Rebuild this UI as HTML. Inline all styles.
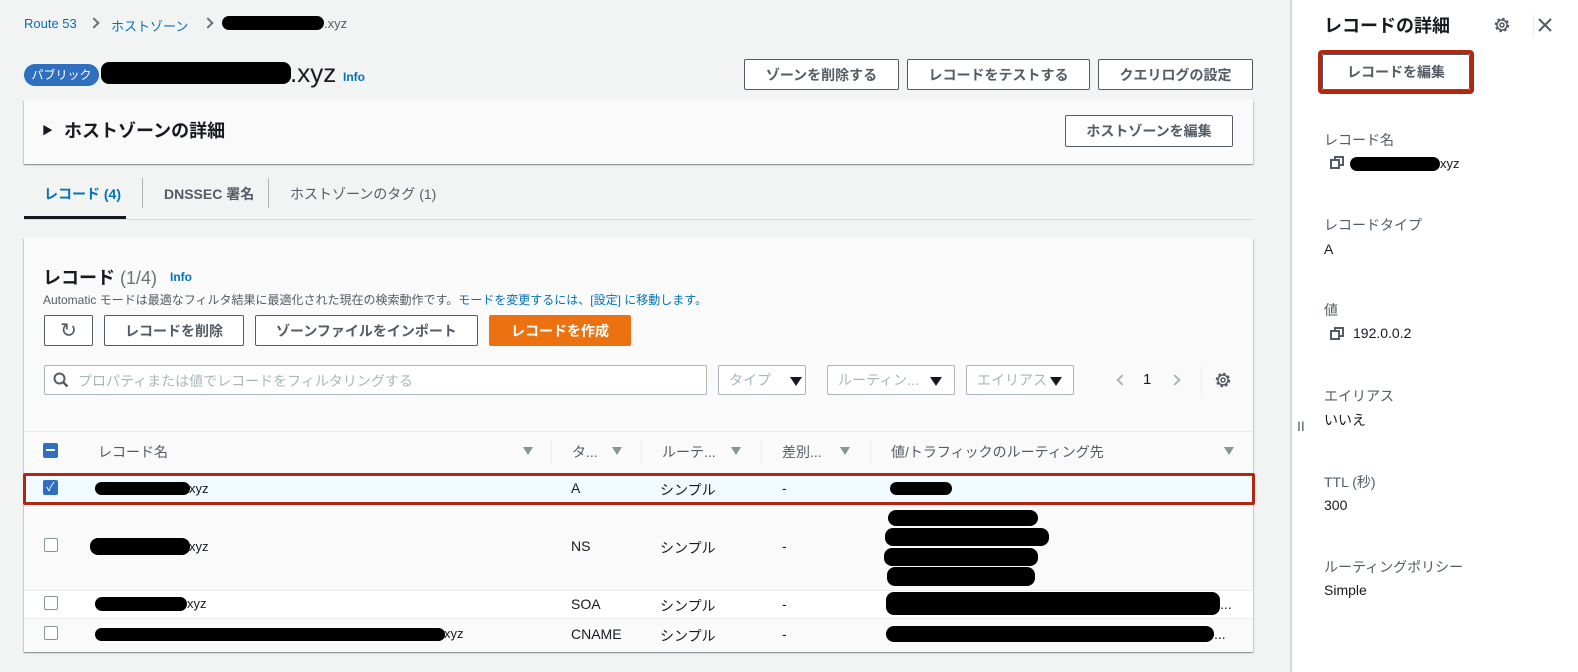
<!DOCTYPE html>
<html><head><meta charset="utf-8"><style>
*{box-sizing:border-box;margin:0;padding:0}
body{width:1578px;height:672px;overflow:hidden;background:#f2f3f3;font-family:"Liberation Sans","Noto Sans CJK JP",sans-serif;color:#16191f;position:relative;font-size:14px}
.a{position:absolute;white-space:nowrap}
.btn{position:absolute;border:1px solid #545b64;border-radius:2px;background:#fff;font-weight:bold;color:#545b64;font-size:14px;display:flex;align-items:center;justify-content:center}
.blk{position:absolute;background:#000;border-radius:8px}
.link{color:#0073bb}
.gray{color:#545b64}
.card{position:absolute;background:#fafafa;box-shadow:0 1px 1px rgba(0,28,36,.3),1px 1px 1px rgba(0,28,36,.15),-1px 1px 1px rgba(0,28,36,.15)}
.sel{position:absolute;border:1px solid #aab7b8;border-radius:2px;background:#fff;color:#aab7b8;font-size:14px;padding-left:10px;display:flex;align-items:center}
.tri{position:absolute;width:0;height:0;border-left:6px solid transparent;border-right:6px solid transparent;border-top:9px solid #16191f}
.ft{position:absolute;width:0;height:0;border-left:5px solid transparent;border-right:5px solid transparent;border-top:8px solid #879596}
.cb{position:absolute;width:14px;height:14px;border:1px solid #879596;border-radius:2px;background:#fff}
.hr{position:absolute;height:1px;background:#eaeded}
.chev{position:absolute;width:8px;height:8px;border-top:2px solid #687078;border-right:2px solid #687078;transform:rotate(45deg)}
</style></head><body>
<div class="a link" style="left:24px;top:16px;font-size:13px">Route 53</div>
<div class="chev" style="left:90px;top:19px"></div>
<div class="a link" style="left:111px;top:16px;font-size:13px">ホストゾーン</div>
<div class="chev" style="left:204px;top:19px"></div>
<div class="blk" style="left:222px;top:16px;width:102px;height:14px"></div>
<div class="a" style="left:324px;top:16px;font-size:13px;color:#545b64">.xyz</div>

<div class="a" style="left:24px;top:64px;width:75px;height:22px;background:#2e6fc0;border-radius:11px;color:#fff;font-size:12px;text-align:center;line-height:22px">パブリック</div>
<div class="blk" style="left:101px;top:62px;width:190px;height:22px"></div>
<div class="a" style="left:290px;top:58px;font-size:26px">.xyz</div>
<div class="a link" style="left:343px;top:70px;font-size:12px;font-weight:bold">Info</div>
<div class="btn" style="left:744px;top:59px;width:155px;height:31px">ゾーンを削除する</div>
<div class="btn" style="left:907px;top:59px;width:183px;height:31px">レコードをテストする</div>
<div class="btn" style="left:1098px;top:59px;width:155px;height:31px">クエリログの設定</div>

<div class="card" style="left:24px;top:100px;width:1229px;height:64px"></div>
<div class="a" style="left:42px;top:122px;font-size:11px">▶</div>
<div class="a" style="left:64px;top:117px;font-size:18px;font-weight:bold">ホストゾーンの詳細</div>
<div class="btn" style="left:1065px;top:115px;width:168px;height:32px">ホストゾーンを編集</div>

<div class="a link" style="left:44px;top:184px;font-size:14px;font-weight:bold">レコード (4)</div>
<div class="a" style="left:24px;top:216px;width:102px;height:3px;background:#16191f"></div>
<div class="a" style="left:142px;top:178px;width:1px;height:30px;background:#aab7b8"></div>
<div class="a gray" style="left:164px;top:184px;font-weight:bold">DNSSEC 署名</div>
<div class="a" style="left:268px;top:178px;width:1px;height:30px;background:#aab7b8"></div>
<div class="a gray" style="left:290px;top:184px">ホストゾーンのタグ (1)</div>
<div class="a" style="left:24px;top:219px;width:1229px;height:1px;background:#d5dbdb"></div>

<div class="card" style="left:24px;top:238px;width:1229px;height:414px"></div>
<div class="a" style="left:43px;top:264px;font-size:18px;font-weight:bold">レコード <span style="font-weight:normal;color:#687078">(1/4)</span></div>
<div class="a link" style="left:170px;top:270px;font-size:12px;font-weight:bold">Info</div>
<div class="a gray" style="left:43px;top:291px;font-size:12px">Automatic モードは最適なフィルタ結果に最適化された現在の検索動作です。<span class="link">モードを変更するには、[設定] に移動します。</span></div>
<div class="btn" style="left:44px;top:315px;width:49px;height:31px;font-size:20px;font-weight:normal">↻</div>
<div class="btn" style="left:104px;top:315px;width:140px;height:31px">レコードを削除</div>
<div class="btn" style="left:255px;top:315px;width:223px;height:31px">ゾーンファイルをインポート</div>
<div class="btn" style="left:489px;top:315px;width:142px;height:31px;background:#ec7211;border-color:#ec7211;color:#fff">レコードを作成</div>

<div class="a" style="left:44px;top:365px;width:663px;height:30px;background:#fff;border:1px solid #aab7b8;border-radius:2px"></div>
<svg class="a" style="left:52px;top:371px" width="18" height="18" viewBox="0 0 18 18"><circle cx="7.5" cy="7.5" r="5" fill="none" stroke="#545b64" stroke-width="2"/><path d="M11 11l4.5 4.5" stroke="#545b64" stroke-width="2.5"/></svg>
<div class="a" style="left:78px;top:371px;color:#aab7b8">プロパティまたは値でレコードをフィルタリングする</div>
<div class="sel" style="left:718px;top:365px;width:88px;height:30px">タイプ</div><div class="tri" style="left:790px;top:377px"></div>
<div class="sel" style="left:827px;top:365px;width:128px;height:30px">ルーティン...</div><div class="tri" style="left:930px;top:377px"></div>
<div class="sel" style="left:966px;top:365px;width:108px;height:30px">エイリアス</div><div class="tri" style="left:1050px;top:377px"></div>
<div class="chev" style="left:1118px;top:376px;transform:rotate(-135deg);border-color:#aab7b8"></div>
<div class="a" style="left:1143px;top:371px;font-size:15px">1</div>
<div class="chev" style="left:1171px;top:376px;border-color:#aab7b8"></div>
<div class="a" style="left:1201px;top:367px;width:1px;height:28px;background:#eaeded"></div>
<svg class="a" style="left:1214px;top:371px" width="18" height="18" viewBox="0 0 18 18"><circle cx="9" cy="9" r="6" fill="none" stroke="#545b64" stroke-width="2.5" stroke-dasharray="2.4 2.3"/><circle cx="9" cy="9" r="5" fill="none" stroke="#545b64" stroke-width="1.5"/><circle cx="9" cy="9" r="2" fill="none" stroke="#545b64" stroke-width="1.5"/></svg>

<div class="hr" style="left:24px;top:431px;width:1229px"></div>
<div class="a" style="left:43px;top:443px;width:15px;height:15px;background:#2e6fc0;border-radius:2px"><div style="position:absolute;left:3px;top:6px;width:9px;height:2px;background:#fff"></div></div>
<div class="a gray" style="left:98px;top:442px">レコード名</div><div class="ft" style="left:523px;top:447px"></div>
<div class="a" style="left:551px;top:440px;width:1px;height:24px;background:#eaeded"></div>
<div class="a gray" style="left:572px;top:442px">タ...</div><div class="ft" style="left:612px;top:447px"></div>
<div class="a" style="left:641px;top:440px;width:1px;height:24px;background:#eaeded"></div>
<div class="a gray" style="left:662px;top:442px">ルーテ...</div><div class="ft" style="left:731px;top:447px"></div>
<div class="a" style="left:761px;top:440px;width:1px;height:24px;background:#eaeded"></div>
<div class="a gray" style="left:782px;top:442px">差別...</div><div class="ft" style="left:840px;top:447px"></div>
<div class="a" style="left:870px;top:440px;width:1px;height:24px;background:#eaeded"></div>
<div class="a gray" style="left:891px;top:442px">値/トラフィックのルーティング先</div><div class="ft" style="left:1224px;top:447px"></div>

<div class="a" style="left:23px;top:473px;width:1232px;height:32px;background:#f1faff;border:3px solid #b3260f;border-radius:2px"></div>
<div class="a" style="left:43px;top:480px;width:15px;height:15px;background:#2e6fc0;border-radius:2px;color:#fff;font-size:12px;line-height:15px;text-align:center">✓</div>
<div class="blk" style="left:95px;top:482px;width:95px;height:13px"></div><div class="a" style="left:189px;top:481px;font-size:13px">xyz</div>
<div class="a" style="left:571px;top:480px">A</div><div class="a" style="left:660px;top:480px">シンプル</div><div class="a" style="left:782px;top:480px">-</div>
<div class="blk" style="left:890px;top:482px;width:62px;height:13px"></div>

<div class="cb" style="left:44px;top:538px"></div>
<div class="blk" style="left:90px;top:538px;width:100px;height:17px"></div><div class="a" style="left:189px;top:539px;font-size:13px">xyz</div>
<div class="a" style="left:571px;top:538px">NS</div><div class="a" style="left:660px;top:538px">シンプル</div><div class="a" style="left:782px;top:538px">-</div>
<div class="blk" style="left:888px;top:510px;width:150px;height:16px"></div>
<div class="blk" style="left:885px;top:528px;width:164px;height:18px"></div>
<div class="blk" style="left:884px;top:548px;width:154px;height:18px"></div>
<div class="blk" style="left:887px;top:567px;width:148px;height:19px"></div>
<div class="hr" style="left:24px;top:590px;width:1229px"></div>
<div class="a" style="left:24px;top:591px;width:1229px;height:27px;background:#fff"></div>
<div class="cb" style="left:44px;top:596px"></div>
<div class="blk" style="left:95px;top:597px;width:92px;height:14px"></div><div class="a" style="left:187px;top:596px;font-size:13px">xyz</div>
<div class="a" style="left:571px;top:596px">SOA</div><div class="a" style="left:660px;top:596px">シンプル</div><div class="a" style="left:782px;top:596px">-</div>
<div class="blk" style="left:886px;top:592px;width:334px;height:23px"></div><div class="a" style="left:1220px;top:596px">...</div>
<div class="hr" style="left:24px;top:618px;width:1229px"></div>
<div class="cb" style="left:44px;top:626px"></div>
<div class="blk" style="left:95px;top:628px;width:350px;height:13px"></div><div class="a" style="left:444px;top:626px;font-size:13px">xyz</div>
<div class="a" style="left:571px;top:626px">CNAME</div><div class="a" style="left:660px;top:626px">シンプル</div><div class="a" style="left:782px;top:626px">-</div>
<div class="blk" style="left:886px;top:626px;width:328px;height:16px"></div><div class="a" style="left:1214px;top:626px">...</div>

<div class="a" style="left:1290px;top:0;width:288px;height:672px;background:#fff;border-left:2px solid #d5dbdb"></div>
<div class="a" style="left:1297px;top:418px;font-size:14px;color:#545b64">II</div>
<div class="a" style="left:1324px;top:12px;font-size:18px;font-weight:bold">レコードの詳細</div>
<svg class="a" style="left:1493px;top:16px" width="18" height="18" viewBox="0 0 18 18"><circle cx="9" cy="9" r="6" fill="none" stroke="#545b64" stroke-width="2.5" stroke-dasharray="2.4 2.3"/><circle cx="9" cy="9" r="5" fill="none" stroke="#545b64" stroke-width="1.5"/><circle cx="9" cy="9" r="2" fill="none" stroke="#545b64" stroke-width="1.5"/></svg>
<div class="a" style="left:1533px;top:14px;width:1px;height:22px;background:#eaeded"></div>
<svg class="a" style="left:1537px;top:17px" width="16" height="16" viewBox="0 0 16 16"><path d="M2 2l12 12M14 2L2 14" stroke="#545b64" stroke-width="2"/></svg>
<div class="a" style="left:1318px;top:50px;width:156px;height:44px;border:4px solid #b3260f;border-radius:4px"></div>
<div class="btn" style="left:1322px;top:54px;width:148px;height:36px">レコードを編集</div>
<div class="a gray" style="left:1324px;top:130px">レコード名</div>
<svg class="a" style="left:1330px;top:156px" width="14" height="14" viewBox="0 0 14 14"><rect x="1" y="4" width="8" height="8" fill="none" stroke="#545b64" stroke-width="2"/><path d="M5 4V1h8v8h-4" fill="none" stroke="#545b64" stroke-width="2"/></svg>
<div class="blk" style="left:1350px;top:157px;width:90px;height:14px"></div><div class="a" style="left:1440px;top:156px;font-size:13px">xyz</div>
<div class="a gray" style="left:1324px;top:215px">レコードタイプ</div>
<div class="a" style="left:1324px;top:241px">A</div>
<div class="a gray" style="left:1324px;top:300px">値</div>
<svg class="a" style="left:1330px;top:327px" width="14" height="14" viewBox="0 0 14 14"><rect x="1" y="4" width="8" height="8" fill="none" stroke="#545b64" stroke-width="2"/><path d="M5 4V1h8v8h-4" fill="none" stroke="#545b64" stroke-width="2"/></svg>
<div class="a" style="left:1353px;top:325px">192.0.0.2</div>
<div class="a gray" style="left:1324px;top:386px">エイリアス</div>
<div class="a" style="left:1324px;top:410px">いいえ</div>
<div class="a gray" style="left:1324px;top:472px">TTL (秒)</div>
<div class="a" style="left:1324px;top:497px">300</div>
<div class="a gray" style="left:1324px;top:557px">ルーティングポリシー</div>
<div class="a" style="left:1324px;top:582px">Simple</div>
</body></html>
